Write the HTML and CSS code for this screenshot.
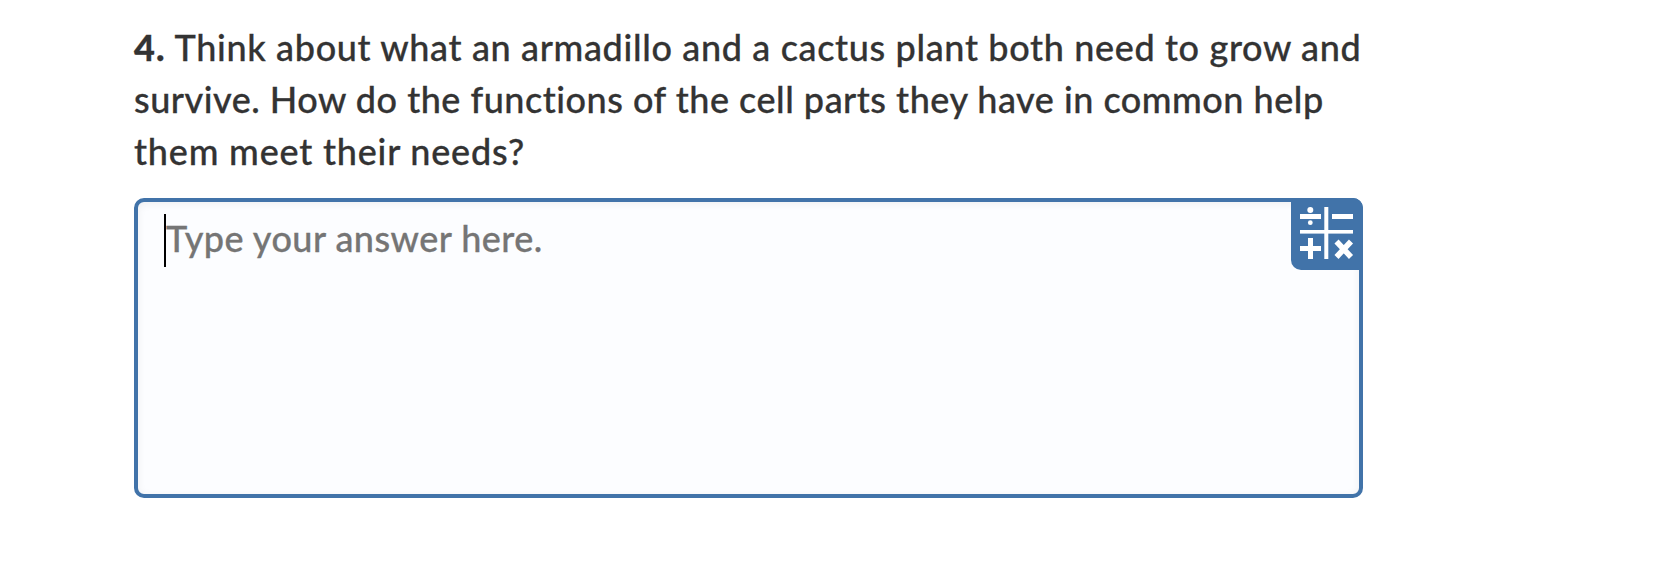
FILE: index.html
```html
<!DOCTYPE html>
<html lang="en">
<head>
    <meta charset="UTF-8">
    <meta name="viewport" content="width=device-width, initial-scale=1.0">
    <title>Question 4</title>
    <link rel="stylesheet" href="styles.css">
</head>
<body>
    <div class="container">
        <div class="question">
            <div class="line line-one"><b>4.</b> Think about what an armadillo and a cactus plant both need to grow and</div>
            <div class="line line-two">survive. How do the functions of the cell parts they have in common help</div>
            <div class="line line-three">them meet their needs?</div>
        </div>
        <div class="answer">
            <div class="field">
                <span class="caret"></span>
                <span class="placeholder">Type your answer here.</span>
            </div>
            <div class="math-button">
                <svg width="72" height="72" viewBox="0 0 72 72" fill="#fff">
                    <rect x="33.3" y="9" width="4" height="52"/>
                    <rect x="9" y="32" width="53" height="3.6"/>
                    <circle cx="19.3" cy="12" r="3"/>
                    <rect x="9" y="16" width="21" height="5"/>
                    <circle cx="19.3" cy="24.7" r="2.4"/>
                    <rect x="41" y="16" width="21" height="5"/>
                    <rect x="9" y="48" width="21" height="5"/>
                    <rect x="17" y="40" width="5" height="21"/>
                    <path d="M45.5 43.5 60 59M60 43.5 45.5 59" stroke="#fff" stroke-width="5.6"/>
                </svg>
            </div>
        </div>
    </div>
</body>
</html>
```

FILE: styles.css
```css
body {
    margin: 0;
    overflow: hidden;
    font-family: Lato, 'Open Sans', sans-serif;
    font-size: 36px;
    font-weight: 500;
    line-height: 52px;
    background: #fff;
    color: #333;
    -webkit-text-stroke: 0.3px;
}
.container {
    width: 1229px;
    padding: 21px 0 0 134px;
}
.line {
    white-space: nowrap;
}
.line-one {
    letter-spacing: 0.65px;
}
.line-two {
    letter-spacing: 0.51px;
}
.line-three {
    letter-spacing: 0.8px;
}
b {
    font-weight: 900;
    letter-spacing: 1.2px;
}
.answer {
    display: flex;
    justify-content: space-between;
    align-items: flex-start;
    box-sizing: border-box;
    height: 300px;
    margin-top: 21px;
    border: 4px solid #4173a9;
    border-radius: 10px;
    background: #fcfdff;
    box-shadow: inset 0 2px 8px rgba(0, 0, 0, 0.06);
}
.field {
    display: flex;
    align-items: flex-start;
    padding: 12px 0 0 26px;
}
.caret {
    width: 2px;
    height: 53px;
    background: #000;
}
.placeholder {
    margin-top: -2px;
    color: #757575;
    letter-spacing: 0.47px;
}
.math-button {
    width: 72px;
    height: 72px;
    margin: -4px -4px 0 0;
    background: #4173a9;
    border-radius: 0 10px 0 10px;
}
.math-button svg {
    display: block;
}
```
